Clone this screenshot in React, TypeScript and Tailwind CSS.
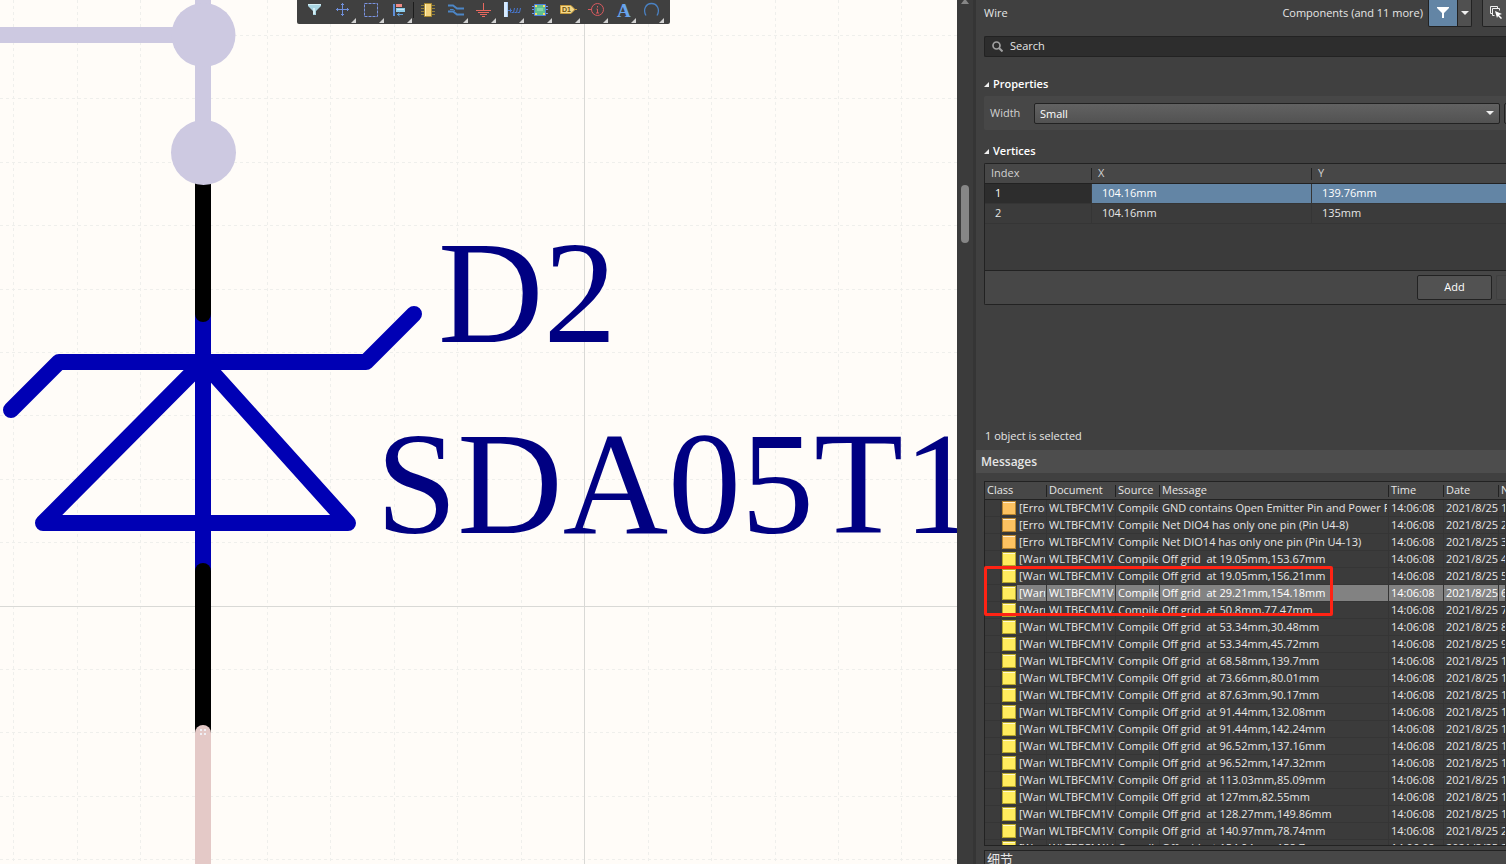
import { useState } from 'react'
import type { ReactNode } from 'react'
import clsx from 'clsx'

type Message = {
  level: 'Error' | 'Warning'
  text: string
}

const messages: Message[] = [
  { level: 'Error', text: 'GND contains Open Emitter Pin and Power Pin' },
  { level: 'Error', text: 'Net DIO4 has only one pin (Pin U4-8)' },
  { level: 'Error', text: 'Net DIO14 has only one pin (Pin U4-13)' },
  { level: 'Warning', text: 'Off grid  at 19.05mm,153.67mm' },
  { level: 'Warning', text: 'Off grid  at 19.05mm,156.21mm' },
  { level: 'Warning', text: 'Off grid  at 29.21mm,154.18mm' },
  { level: 'Warning', text: 'Off grid  at 50.8mm,77.47mm' },
  { level: 'Warning', text: 'Off grid  at 53.34mm,30.48mm' },
  { level: 'Warning', text: 'Off grid  at 53.34mm,45.72mm' },
  { level: 'Warning', text: 'Off grid  at 68.58mm,139.7mm' },
  { level: 'Warning', text: 'Off grid  at 73.66mm,80.01mm' },
  { level: 'Warning', text: 'Off grid  at 87.63mm,90.17mm' },
  { level: 'Warning', text: 'Off grid  at 91.44mm,132.08mm' },
  { level: 'Warning', text: 'Off grid  at 91.44mm,142.24mm' },
  { level: 'Warning', text: 'Off grid  at 96.52mm,137.16mm' },
  { level: 'Warning', text: 'Off grid  at 96.52mm,147.32mm' },
  { level: 'Warning', text: 'Off grid  at 113.03mm,85.09mm' },
  { level: 'Warning', text: 'Off grid  at 127mm,82.55mm' },
  { level: 'Warning', text: 'Off grid  at 128.27mm,149.86mm' },
  { level: 'Warning', text: 'Off grid  at 140.97mm,78.74mm' },
  { level: 'Warning', text: 'Off grid  at 154.94mm,158.7mm' },
]

const vertices = [
  { x: '104.16mm', y: '139.76mm' },
  { x: '104.16mm', y: '135mm' },
]

const gridX = [13, 77, 140, 203, 267, 330, 394, 457, 521, 648, 711, 775, 838, 901]
const gridY = [35, 98, 162, 225, 289, 352, 415, 479, 542, 669, 732, 796, 859]

function Schematic() {
  return (
    <svg className="block h-full w-full" role="img" aria-label="Schematic sheet">
      <g stroke="#efefec" strokeDasharray="3 3" shapeRendering="crispEdges">
        {gridX.map((x) => (
          <line key={x} x1={x + 0.5} x2={x + 0.5} y1="0" y2="100%" />
        ))}
        {gridY.map((y) => (
          <line key={y} x1="0" x2="100%" y1={y + 0.5} y2={y + 0.5} />
        ))}
      </g>
      <g stroke="#d9d9d6" shapeRendering="crispEdges">
        <line x1="584.5" x2="584.5" y1="0" y2="100%" />
        <line x1="0" x2="100%" y1="606.5" y2="606.5" />
      </g>

      {/* component body */}
      <g stroke="#0000b4" strokeWidth="16" strokeLinecap="round" strokeLinejoin="round" fill="none">
        <path d="M203 314V574" />
        <path d="M11 410L59 362H366L414 314" />
        <path d="M203 362L43 523H348Z" />
      </g>

      {/* pins */}
      <g stroke="#000" strokeWidth="16" strokeLinecap="round">
        <path d="M203 180V314" />
        <path d="M203 571V728" />
      </g>
      <path d="M195 728h16v5h-16z" fill="#000" />

      {/* wires */}
      <g stroke="#cdc9e1" strokeWidth="16" fill="#cdc9e1">
        <path d="M0 35H203M203 0V152" />
        <circle cx="203.5" cy="35" r="32" stroke="none" />
        <circle cx="203.5" cy="152.5" r="32.5" stroke="none" />
      </g>
      <path d="M203 733V2000" stroke="#e4c9c7" strokeWidth="16" strokeLinecap="round" />
      <path d="M200 729h2v2h-2zM204 729h2v2h-2zM200 733h2v2h-2zM204 733h2v2h-2z" fill="#f0f0f5" />

      <g fill="#000082" fontSize="146" className="font-['Liberation_Serif',serif]">
        <text x="438" y="342">D2</text>
        <text x="376" y="533">SDA05T1</text>
      </g>
    </svg>
  )
}

function ToolButton({ label, menu = true, children }: { label: string; menu?: boolean; children: ReactNode }) {
  return (
    <button type="button" aria-label={label} className="h-6 w-7">
      <svg width="28" height="24" viewBox="0 0 28 24" fill="none">
        {children}
        {menu && <path d="M28 18v5h-5z" fill="#d2d2d2" />}
      </svg>
    </button>
  )
}

function ActiveBar() {
  return (
    <div role="toolbar" className="absolute left-[297px] top-0 flex h-6 rounded-b-xs bg-[#404040] pl-[3px] pr-[6px]">
      <ToolButton label="Filter" menu={false}>
        <path d="M8 4h13v2l-5 5v4h-3v-4L8 6z" fill="#a9d5e2" />
        <path d="M8 4h13v1H8z" fill="#d5eef5" />
        <path d="M13 8h2v6h-2z" fill="#d5eef5" />
      </ToolButton>
      <ToolButton label="Move">
        <path d="M14.500 3v13M8 9.500h13" stroke="#6f8fdb" />
        <path d="M13 4.500h3M13 14.500h3M9.500 8v3M19.500 8v3" stroke="#6f8fdb" />
      </ToolButton>
      <ToolButton label="Select">
        <path d="M8.500 3.500h13v13h-13z" stroke="#7b93e0" strokeDasharray="3 1" />
      </ToolButton>
      <ToolButton label="Align">
        <path d="M9 4h2v12H9z" fill="#5f8fd8" />
        <path d="M12 4h6v3h-6z" fill="#f08a84" />
        <path d="M12 8h9v4h-9z" fill="#8ccbea" />
        <path d="M13 9.500h7" stroke="#c5e8f5" />
        <path d="M13 14.500h6M15.500 13l-2 1.500 2 1.500" stroke="#5f9fd8" />
      </ToolButton>
      <ToolButton label="Place part" menu={false}>
        <path d="M1.500 2v16" stroke="#1c1c1c" />
        <path d="M9 5.500h14M9 8.500h14M9 11.500h14M9 14.500h14" stroke="#94803a" />
        <path d="M12.500 3.500h7v13h-7z" fill="#f3d27c" stroke="#a88930" />
        <path d="M13.500 4v12" stroke="#fff0b8" />
      </ToolButton>
      <ToolButton label="Place wire">
        <path d="M8 5.500h5l4 3h7M8 11.500h5l4 3h7" stroke="#4c86c6" strokeWidth="2" />
        <path d="M10 9.500h3l2 1.500" stroke="#4c86c6" />
      </ToolButton>
      <ToolButton label="Place power port">
        <path d="M15.500 3v7" stroke="#e8685e" />
        <path d="M8 10.500h15M10 12.500h11M12 14.500h7M14 16.500h3" stroke="#e8685e" />
      </ToolButton>
      <ToolButton label="Place harness">
        <path d="M8 2h4v15H8z" fill="#a9cdf5" />
        <path d="M8 2h3v15H8z" fill="#d8ebff" />
        <path d="M12 10.500h4M14.500 8.500v4M18.500 8l-1 4.500h-2M21.500 8l-1 4.500h-2M24.500 8l-1 4.500h-2" stroke="#4878d0" />
      </ToolButton>
      <ToolButton label="Place sheet symbol">
        <path d="M8 6.500h16M8 9.500h16M8 13.500h16" stroke="#6d98e8" />
        <path d="M10.500 4.500h11v11h-11z" fill="#62c08e" stroke="#4c80dc" />
        <path d="M11 5h2v2h-2zM19 5h2v2h-2zM11 13h2v2h-2zM19 13h2v2h-2z" fill="#f1dc67" />
        <path d="M13 8h6v3h-6z" fill="#84d4a7" />
      </ToolButton>
      <ToolButton label="Place net label">
        <path d="M8.500 5.500H19l4 4-4 4H8.500z" fill="#f5d889" stroke="#c59a3c" />
        <path d="M22 9.500h3" stroke="#c59a3c" />
        <text x="10" y="12" fontSize="7" fontWeight="700" fill="#6a5010" className="font-['Liberation_Sans',sans-serif]">
          D1
        </text>
      </ToolButton>
      <ToolButton label="Place directive">
        <circle cx="17.500" cy="9.500" r="6" stroke="#d85a5f" />
        <path d="M8 9.500h4M17.500 6v1.500M16.500 9h1v4M16 13h3" stroke="#d85a5f" />
      </ToolButton>
      <ToolButton label="Place text">
        <text x="9" y="17" fontSize="19" fontWeight="700" fill="#68a4ec" className="font-['Liberation_Serif',serif]">
          A
        </text>
      </ToolButton>
      <ToolButton label="Place arc">
        <path d="M10 15.500C6.500 9.500 10 3.500 15.500 3.500S24.500 9.500 21 15.500" stroke="#4a82c4" strokeWidth="1.300" />
      </ToolButton>
    </div>
  )
}

function SectionTitle({ children }: { children: ReactNode }) {
  return (
    <h2 className="flex h-4 items-center gap-1 font-semibold text-white">
      <svg width="5" height="5" viewBox="0 0 5 5">
        <path d="M5 0v5H0z" fill="#f0f0f0" />
      </svg>
      {children}
    </h2>
  )
}

function ColumnLabel({ children, last = false }: { children: ReactNode; last?: boolean }) {
  return (
    <div className={clsx('flex h-3 items-center whitespace-nowrap', !last && 'border-r border-[#222]')}>{children}</div>
  )
}

function PropertiesPanel() {
  const [selected, setSelected] = useState(0)

  return (
    <section className="flex min-h-0 flex-1 flex-col overflow-hidden pl-2">
      <header className="flex h-[26px] shrink-0 items-center">
        <h1 className="flex-1">Wire</h1>
        <span className="mr-[5px]">Components (and 11 more)</span>
        <div className="flex h-[27px] overflow-hidden rounded-b-xs border border-t-0 border-[#222]">
          <button type="button" aria-label="Filter objects" className="flex w-7 items-center justify-center bg-[#6385a5]">
            <svg width="12" height="11" viewBox="0 0 12 11">
              <path d="M0 0h12v1L7 6v5H5V6L0 1z" fill="#fff" />
            </svg>
          </button>
          <button
            type="button"
            aria-label="Filter options"
            className="flex w-[14px] items-center justify-center border-l border-[#222] bg-[#505050]"
          >
            <svg width="8" height="4" viewBox="0 0 8 4">
              <path d="M0 0h8L4 4z" fill="#f0f0f0" />
            </svg>
          </button>
        </div>
        <button
          type="button"
          aria-label="Select mode"
          className="-mr-1 ml-[10px] flex h-[27px] w-7 items-center rounded-bl-xs border border-t-0 border-[#222] bg-[#505050] pl-[7px]"
        >
          <svg width="12" height="13" viewBox="0 0 12 13" fill="none">
            <path d="M2.500 7.500h-2v-7h7v2M4.500 9.500h-2v-7h7v2" stroke="#eee" />
            <path d="M5 5l7 3-3 1 3 3-1 1-3-3-1 2z" fill="#fff" />
          </svg>
        </button>
      </header>

      <div className="mt-[10px] flex h-[21px] shrink-0 items-center gap-[7px] rounded-l-xs border border-r-0 border-[#222] bg-[#2d2d2d] pl-[7px]">
        <svg width="11" height="11" viewBox="0 0 11 11" fill="none">
          <circle cx="4.500" cy="4.500" r="3.500" stroke="#a0a0a0" strokeWidth="1.700" />
          <path d="M7 7l3.500 3.500" stroke="#a0a0a0" strokeWidth="2" />
        </svg>
        <input
          type="search"
          aria-label="Search"
          placeholder="Search"
          className="min-w-0 flex-1 bg-transparent placeholder-[#e6e6e6] outline-none"
        />
      </div>

      <div className="mt-[19px] flex flex-col gap-1">
        <SectionTitle>Properties</SectionTitle>
        <div className="flex h-[34px] items-center rounded-l-xs bg-[#474747] pl-[6px]">
          <label htmlFor="wire-width" className="w-11 text-[#d2d2d2]">
            Width
          </label>
          <div className="relative flex-1">
            <select
              id="wire-width"
              defaultValue="Small"
              className="block h-[21px] w-full appearance-none rounded-xs border border-[#222] bg-linear-to-b from-[#626262] to-[#525252] px-[5px] leading-none text-white"
            >
              <option>Smallest</option>
              <option>Small</option>
              <option>Medium</option>
              <option>Large</option>
            </select>
            <svg width="8" height="4" viewBox="0 0 8 4" className="pointer-events-none absolute right-[6px] top-2">
              <path d="M0 0h8L4 4z" fill="#f0f0f0" />
            </svg>
          </div>
          <button
            type="button"
            aria-label="Wire color"
            className="-mr-1 ml-1 h-[21px] w-[6px] rounded-l-xs border border-[#222] bg-[#505050]"
          />
        </div>
      </div>

      <div className="mt-[13px] flex flex-col gap-1">
        <SectionTitle>Vertices</SectionTitle>
        <div className="rounded-l-xs border border-r-0 border-[#222]">
          <div className="h-[107px] border-b border-[#222] bg-[#3b3b3b]">
            <table className="w-full table-fixed border-separate border-spacing-0 text-left">
              <colgroup>
                <col className="w-[107px]" />
                <col className="w-[220px]" />
                <col />
              </colgroup>
              <thead>
                <tr className="h-5 bg-[#474747] text-[#d2d2d2] [&_th]:border-b [&_th]:border-[#222] [&_th]:p-0 [&_th]:pl-[6px] [&_th]:font-normal">
                  <th>
                    <ColumnLabel>Index</ColumnLabel>
                  </th>
                  <th>
                    <ColumnLabel>X</ColumnLabel>
                  </th>
                  <th>
                    <ColumnLabel last>Y</ColumnLabel>
                  </th>
                </tr>
              </thead>
              <tbody className="[&_td]:border-b [&_td]:border-[#353535] [&_td]:p-0 [&_td]:pl-[10px]">
                {vertices.map((vertex, i) => (
                  <tr key={i} onClick={() => setSelected(i)} className="h-5">
                    <td className={clsx('border-r', i === selected && 'bg-[#2d2d2d] text-white')}>{i + 1}</td>
                    <td className={clsx('border-r', i === selected && 'bg-[#6385a5] text-white')}>{vertex.x}</td>
                    <td className={clsx(i === selected && 'bg-[#6385a5] text-white')}>{vertex.y}</td>
                  </tr>
                ))}
              </tbody>
            </table>
          </div>
          <div className="flex h-[33px] items-center justify-end gap-1 bg-[#474747]">
            <button type="button" className="h-[25px] w-[75px] rounded-xs border border-[#222] bg-[#525252] text-white">
              Add
            </button>
            <button
              type="button"
              aria-label="Remove"
              disabled
              className="h-[25px] w-[10px] rounded-l-xs border border-r-0 border-[#404040] bg-[#484848]"
            />
          </div>
        </div>
      </div>

      <p className="mt-auto pb-[6px] pl-px leading-4">1 object is selected</p>
    </section>
  )
}

function MessagesPanel() {
  const [selected, setSelected] = useState(5)

  return (
    <section className="flex h-[414px] shrink-0 flex-col">
      <h2 className="flex h-[23px] shrink-0 items-center bg-[#4d4d4d] pl-[5px] text-[12px] leading-4 font-semibold">
        Messages
      </h2>
      <div className="relative ml-2 mt-2 min-h-0 flex-1">
        <div className="h-full overflow-hidden border border-r-0 border-[#222] bg-[#3b3b3b]">
          <table className="w-full table-fixed border-separate border-spacing-0 text-left">
            <colgroup>
              <col className="w-4" />
              <col className="w-[46px]" />
              <col className="w-[69px]" />
              <col className="w-[44px]" />
              <col className="w-[229px]" />
              <col className="w-[55px]" />
              <col className="w-[55px]" />
              <col />
            </colgroup>
            <thead>
              <tr className="h-[18px] bg-[#474747] [&_th]:overflow-hidden [&_th]:border-b [&_th]:border-[#222] [&_th]:p-0 [&_th]:pl-[2px] [&_th]:font-normal">
                <th colSpan={2}>
                  <ColumnLabel>Class</ColumnLabel>
                </th>
                {['Document', 'Source', 'Message', 'Time', 'Date'].map((name) => (
                  <th key={name}>
                    <ColumnLabel>{name}</ColumnLabel>
                  </th>
                ))}
                <th>
                  <ColumnLabel last>No.</ColumnLabel>
                </th>
              </tr>
            </thead>
            <tbody className="[&_td]:overflow-hidden [&_td]:border-r [&_td]:border-b [&_td]:border-[#353535] [&_td]:p-0 [&_td]:whitespace-pre">
              {messages.map((message, i) => {
                const cell = clsx('h-4 pl-[2px] leading-4', i === selected && 'bg-[#828282] text-white')
                const text = 'mr-px block overflow-hidden'
                return (
                  <tr key={i} onClick={() => setSelected(i)} className="h-[17px]">
                    <td />
                    <td>
                      <div className="flex items-center pl-px">
                        <span
                          className={clsx(
                            'size-[14px] shrink-0 border',
                            message.level === 'Error' ? 'border-[#b5832f] bg-[#fcc261]' : 'border-[#b5a52c] bg-[#ffec5e]',
                          )}
                        >
                          <span className="block h-px bg-white/70" />
                        </span>
                        <div className={clsx(cell, 'ml-px min-w-0 flex-1')}>
                          <span className={text}>[{message.level}]</span>
                        </div>
                      </div>
                    </td>
                    <td>
                      <div className={cell}>
                        <span className={text}>WLTBFCM1V4</span>
                      </div>
                    </td>
                    <td>
                      <div className={cell}>
                        <span className={text}>Compiler</span>
                      </div>
                    </td>
                    <td>
                      <div className={cell}>
                        <span className={text}>{message.text}</span>
                      </div>
                    </td>
                    <td>
                      <div className={cell}>14:06:08</div>
                    </td>
                    <td>
                      <div className={cell}>2021/8/25</div>
                    </td>
                    <td>
                      <div className={cell}>{i + 1}</div>
                    </td>
                  </tr>
                )
              })}
            </tbody>
          </table>
        </div>
        {/* callout around the selected warning */}
        <div className="pointer-events-none absolute left-0 top-[85px] h-[50px] w-[349px] rounded-xs border-3 border-[#ff2314]" />
      </div>
      <div className="ml-2 mt-1 h-[14px] shrink-0 overflow-hidden border border-b-0 border-r-0 border-[#222] bg-[#474747] pl-[2px] text-[13px] leading-4">
        细节
      </div>
    </section>
  )
}

export default function App() {
  return (
    <div className="flex h-screen overflow-hidden bg-[#404040] font-['Open_Sans','Noto_Sans_CJK_SC',sans-serif] text-[11px] text-[#e6e6e6]">
      <main className="relative min-w-0 flex-1 overflow-hidden bg-[#fffcf8]">
        <Schematic />
        <ActiveBar />
      </main>
      <div className="flex w-[19px] shrink-0 flex-col items-center border-r-3 border-[#353535] bg-[#3b3b3b]">
        <svg width="8" height="4" viewBox="0 0 8 4">
          <path d="M3 0h2l3 4H0z" fill="#868686" />
        </svg>
        <div className="mt-[181px] h-[58px] w-2 rounded-full bg-[#868686]" />
      </div>
      <aside className="flex w-[530px] shrink-0 flex-col">
        <PropertiesPanel />
        <MessagesPanel />
      </aside>
    </div>
  )
}
